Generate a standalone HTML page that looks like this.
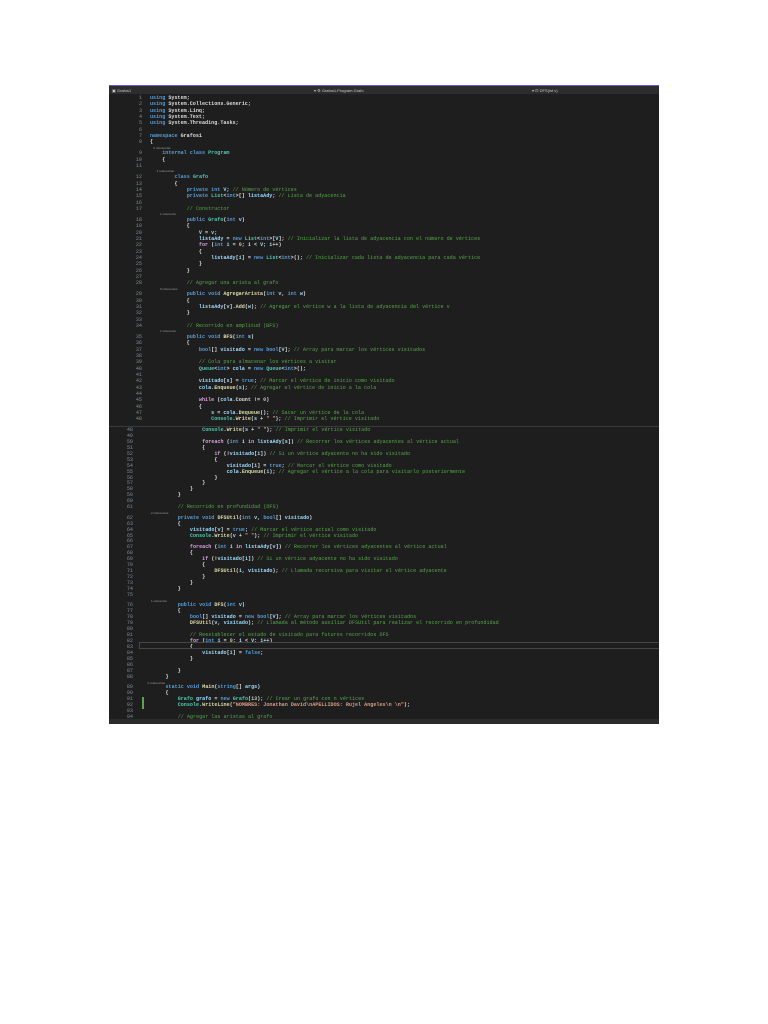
<!DOCTYPE html>
<html><head><meta charset="utf-8"><style>
body{margin:0;background:#fff;width:768px;height:1024px;position:relative;overflow:hidden}
#ed{position:absolute;left:109px;top:85px;width:550px;height:639px;background:#1e1e1e;overflow:hidden}
.top{position:absolute;left:0;top:0;width:550px;height:1px;background:#6a5acd}
.tab{position:absolute;left:0;top:1px;width:550px;height:8px;background:#2d2d30;font:4px "Liberation Sans",sans-serif;color:#ccc}
.tab span{position:absolute;top:1.5px}
.seg{position:absolute;left:0;width:550px;font-family:"Liberation Mono",monospace;font-size:5.1px;color:#dcdcdc;white-space:normal;font-weight:bold}
.l{height:6.33px;line-height:6.33px;position:relative;overflow:visible}
.r{height:4.8px;line-height:4.8px;font-size:3px;color:#999;font-family:"Liberation Sans",sans-serif;position:relative;font-weight:normal}
.n{position:absolute;left:0;width:33px;text-align:right;color:#7d8c93;font-weight:normal}
.c{position:absolute;left:41px;white-space:pre}
.k{color:#569cd6}.t{color:#4ec9b0}.g{color:#57a64a;font-weight:normal}.p{color:#d8a0df}.m{color:#dcdcaa}.v{color:#9cdcfe}.s{color:#d69d85}.u{color:#b5cea8}
.seg2 .l{height:5.95px;line-height:5.95px}
.seg2 .r{height:4.6px;line-height:4.6px}
.seg2 .n{width:24px}.seg2 .c{left:32px}
.stat{position:absolute;left:0;top:634px;width:550px;height:5px;background:#2b2b2b}
.sep{position:absolute;left:0;top:341px;width:550px;height:1px;background:#3a3a3a}
.hl{position:absolute;left:30px;width:520px;height:5px;border:0.5px solid #464646}
.gb{position:absolute;left:33px;width:1.5px;background:#57a64a}
</style></head><body>
<div id="ed">
<div class="top"></div>
<div class="tab"><span style="left:3px">▣ Grafos1</span><span style="left:205px">▾ ⚙ Grafos1.Program.Grafo</span><span style="left:423px">▾ ⊡ DFS(int v)</span></div>
<div class="seg" style="top:10px">
<div class="l"><span class="n">1</span><span class="c"><span class="k">using</span> System;</span></div>
<div class="l"><span class="n">2</span><span class="c"><span class="k">using</span> System.Collections.Generic;</span></div>
<div class="l"><span class="n">3</span><span class="c"><span class="k">using</span> System.Linq;</span></div>
<div class="l"><span class="n">4</span><span class="c"><span class="k">using</span> System.Text;</span></div>
<div class="l"><span class="n">5</span><span class="c"><span class="k">using</span> System.Threading.Tasks;</span></div>
<div class="l"><span class="n">6</span></div>
<div class="l"><span class="n">7</span><span class="c"><span class="k">namespace</span> Grafos1</span></div>
<div class="l"><span class="n">8</span><span class="c">{</span></div>
<div class="r"><span class="c">    0 referencias</span></div>
<div class="l"><span class="n">9</span><span class="c">    <span class="k">internal class</span> <span class="t">Program</span></span></div>
<div class="l"><span class="n">10</span><span class="c">    {</span></div>
<div class="l"><span class="n">11</span></div>
<div class="r"><span class="c">        3 referencias</span></div>
<div class="l"><span class="n">12</span><span class="c">        <span class="k">class</span> <span class="t">Grafo</span></span></div>
<div class="l"><span class="n">13</span><span class="c">        {</span></div>
<div class="l"><span class="n">14</span><span class="c">            <span class="k">private int</span> <span class="v">V</span>; <span class="g">// Número de vértices</span></span></div>
<div class="l"><span class="n">15</span><span class="c">            <span class="k">private</span> <span class="t">List</span>&lt;<span class="k">int</span>&gt;[] <span class="v">listaAdy</span>; <span class="g">// Lista de adyacencia</span></span></div>
<div class="l"><span class="n">16</span></div>
<div class="l"><span class="n">17</span><span class="c">            <span class="g">// Constructor</span></span></div>
<div class="r"><span class="c">            1 referencia</span></div>
<div class="l"><span class="n">18</span><span class="c">            <span class="k">public</span> <span class="t">Grafo</span>(<span class="k">int</span> <span class="v">v</span>)</span></div>
<div class="l"><span class="n">19</span><span class="c">            {</span></div>
<div class="l"><span class="n">20</span><span class="c">                <span class="v">V</span> = <span class="v">v</span>;</span></div>
<div class="l"><span class="n">21</span><span class="c">                <span class="v">listaAdy</span> = <span class="k">new</span> <span class="t">List</span>&lt;<span class="k">int</span>&gt;[<span class="v">V</span>]; <span class="g">// Inicializar la lista de adyacencia con el número de vértices</span></span></div>
<div class="l"><span class="n">22</span><span class="c">                <span class="p">for</span> (<span class="k">int</span> <span class="v">i</span> = <span class="u">0</span>; <span class="v">i</span> &lt; <span class="v">V</span>; <span class="v">i</span>++)</span></div>
<div class="l"><span class="n">23</span><span class="c">                {</span></div>
<div class="l"><span class="n">24</span><span class="c">                    <span class="v">listaAdy</span>[<span class="v">i</span>] = <span class="k">new</span> <span class="t">List</span>&lt;<span class="k">int</span>&gt;(); <span class="g">// Inicializar cada lista de adyacencia para cada vértice</span></span></div>
<div class="l"><span class="n">25</span><span class="c">                }</span></div>
<div class="l"><span class="n">26</span><span class="c">            }</span></div>
<div class="l"><span class="n">27</span></div>
<div class="l"><span class="n">28</span><span class="c">            <span class="g">// Agregar una arista al grafo</span></span></div>
<div class="r"><span class="c">            6 referencias</span></div>
<div class="l"><span class="n">29</span><span class="c">            <span class="k">public void</span> <span class="m">AgregarArista</span>(<span class="k">int</span> <span class="v">v</span>, <span class="k">int</span> <span class="v">w</span>)</span></div>
<div class="l"><span class="n">30</span><span class="c">            {</span></div>
<div class="l"><span class="n">31</span><span class="c">                <span class="v">listaAdy</span>[<span class="v">v</span>].<span class="m">Add</span>(<span class="v">w</span>); <span class="g">// Agregar el vértice w a la lista de adyacencia del vértice v</span></span></div>
<div class="l"><span class="n">32</span><span class="c">            }</span></div>
<div class="l"><span class="n">33</span></div>
<div class="l"><span class="n">34</span><span class="c">            <span class="g">// Recorrido en amplitud (BFS)</span></span></div>
<div class="r"><span class="c">            1 referencia</span></div>
<div class="l"><span class="n">35</span><span class="c">            <span class="k">public void</span> <span class="m">BFS</span>(<span class="k">int</span> <span class="v">s</span>)</span></div>
<div class="l"><span class="n">36</span><span class="c">            {</span></div>
<div class="l"><span class="n">37</span><span class="c">                <span class="k">bool</span>[] <span class="v">visitado</span> = <span class="k">new bool</span>[<span class="v">V</span>]; <span class="g">// Array para marcar los vértices visitados</span></span></div>
<div class="l"><span class="n">38</span></div>
<div class="l"><span class="n">39</span><span class="c">                <span class="g">// Cola para almacenar los vértices a visitar</span></span></div>
<div class="l"><span class="n">40</span><span class="c">                <span class="t">Queue</span>&lt;<span class="k">int</span>&gt; <span class="v">cola</span> = <span class="k">new</span> <span class="t">Queue</span>&lt;<span class="k">int</span>&gt;();</span></div>
<div class="l"><span class="n">41</span></div>
<div class="l"><span class="n">42</span><span class="c">                <span class="v">visitado</span>[<span class="v">s</span>] = <span class="k">true</span>; <span class="g">// Marcar el vértice de inicio como visitado</span></span></div>
<div class="l"><span class="n">43</span><span class="c">                <span class="v">cola</span>.<span class="m">Enqueue</span>(<span class="v">s</span>); <span class="g">// Agregar el vértice de inicio a la cola</span></span></div>
<div class="l"><span class="n">44</span></div>
<div class="l"><span class="n">45</span><span class="c">                <span class="p">while</span> (<span class="v">cola</span>.Count != <span class="u">0</span>)</span></div>
<div class="l"><span class="n">46</span><span class="c">                {</span></div>
<div class="l"><span class="n">47</span><span class="c">                    <span class="v">s</span> = <span class="v">cola</span>.<span class="m">Dequeue</span>(); <span class="g">// Sacar un vértice de la cola</span></span></div>
<div class="l"><span class="n">48</span><span class="c">                    <span class="t">Console</span>.<span class="m">Write</span>(<span class="v">s</span> + <span class="s">" "</span>); <span class="g">// Imprimir el vértice visitado</span></span></div>
</div>
<div class="sep"></div>
<div class="seg seg2" style="top:343px">
<div class="l"><span class="n">48</span><span class="c">                    <span class="t">Console</span>.<span class="m">Write</span>(<span class="v">s</span> + <span class="s">" "</span>); <span class="g">// Imprimir el vértice visitado</span></span></div>
<div class="l"><span class="n">49</span></div>
<div class="l"><span class="n">50</span><span class="c">                    <span class="p">foreach</span> (<span class="k">int</span> <span class="v">i</span> <span class="p">in</span> <span class="v">listaAdy</span>[<span class="v">s</span>]) <span class="g">// Recorrer los vértices adyacentes al vértice actual</span></span></div>
<div class="l"><span class="n">51</span><span class="c">                    {</span></div>
<div class="l"><span class="n">52</span><span class="c">                        <span class="p">if</span> (!<span class="v">visitado</span>[<span class="v">i</span>]) <span class="g">// Si un vértice adyacente no ha sido visitado</span></span></div>
<div class="l"><span class="n">53</span><span class="c">                        {</span></div>
<div class="l"><span class="n">54</span><span class="c">                            <span class="v">visitado</span>[<span class="v">i</span>] = <span class="k">true</span>; <span class="g">// Marcar el vértice como visitado</span></span></div>
<div class="l"><span class="n">55</span><span class="c">                            <span class="v">cola</span>.<span class="m">Enqueue</span>(<span class="v">i</span>); <span class="g">// Agregar el vértice a la cola para visitarlo posteriormente</span></span></div>
<div class="l"><span class="n">56</span><span class="c">                        }</span></div>
<div class="l"><span class="n">57</span><span class="c">                    }</span></div>
<div class="l"><span class="n">58</span><span class="c">                }</span></div>
<div class="l"><span class="n">59</span><span class="c">            }</span></div>
<div class="l"><span class="n">60</span></div>
<div class="l"><span class="n">61</span><span class="c">            <span class="g">// Recorrido en profundidad (DFS)</span></span></div>
<div class="r"><span class="c">            2 referencias</span></div>
<div class="l"><span class="n">62</span><span class="c">            <span class="k">private void</span> <span class="m">DFSUtil</span>(<span class="k">int</span> <span class="v">v</span>, <span class="k">bool</span>[] <span class="v">visitado</span>)</span></div>
<div class="l"><span class="n">63</span><span class="c">            {</span></div>
<div class="l"><span class="n">64</span><span class="c">                <span class="v">visitado</span>[<span class="v">v</span>] = <span class="k">true</span>; <span class="g">// Marcar el vértice actual como visitado</span></span></div>
<div class="l"><span class="n">65</span><span class="c">                <span class="t">Console</span>.<span class="m">Write</span>(<span class="v">v</span> + <span class="s">" "</span>); <span class="g">// Imprimir el vértice visitado</span></span></div>
<div class="l"><span class="n">66</span></div>
<div class="l"><span class="n">67</span><span class="c">                <span class="p">foreach</span> (<span class="k">int</span> <span class="v">i</span> <span class="p">in</span> <span class="v">listaAdy</span>[<span class="v">v</span>]) <span class="g">// Recorrer los vértices adyacentes al vértice actual</span></span></div>
<div class="l"><span class="n">68</span><span class="c">                {</span></div>
<div class="l"><span class="n">69</span><span class="c">                    <span class="p">if</span> (!<span class="v">visitado</span>[<span class="v">i</span>]) <span class="g">// Si un vértice adyacente no ha sido visitado</span></span></div>
<div class="l"><span class="n">70</span><span class="c">                    {</span></div>
<div class="l"><span class="n">71</span><span class="c">                        <span class="m">DFSUtil</span>(<span class="v">i</span>, <span class="v">visitado</span>); <span class="g">// Llamada recursiva para visitar el vértice adyacente</span></span></div>
<div class="l"><span class="n">72</span><span class="c">                    }</span></div>
<div class="l"><span class="n">73</span><span class="c">                }</span></div>
<div class="l"><span class="n">74</span><span class="c">            }</span></div>
<div class="l"><span class="n">75</span></div>
<div class="r"><span class="c">            1 referencia</span></div>
<div class="l"><span class="n">76</span><span class="c">            <span class="k">public void</span> <span class="m">DFS</span>(<span class="k">int</span> <span class="v">v</span>)</span></div>
<div class="l"><span class="n">77</span><span class="c">            {</span></div>
<div class="l"><span class="n">78</span><span class="c">                <span class="k">bool</span>[] <span class="v">visitado</span> = <span class="k">new bool</span>[<span class="v">V</span>]; <span class="g">// Array para marcar los vértices visitados</span></span></div>
<div class="l"><span class="n">79</span><span class="c">                <span class="m">DFSUtil</span>(<span class="v">v</span>, <span class="v">visitado</span>); <span class="g">// Llamada al método auxiliar DFSUtil para realizar el recorrido en profundidad</span></span></div>
<div class="l"><span class="n">80</span></div>
<div class="l"><span class="n">81</span><span class="c">                <span class="g">// Reestablecer el estado de visitado para futuros recorridos DFS</span></span></div>
<div class="l"><span class="n">82</span><span class="c">                <span class="p">for</span> (<span class="k">int</span> <span class="v">i</span> = <span class="u">0</span>; <span class="v">i</span> &lt; <span class="v">V</span>; <span class="v">i</span>++)</span></div>
<div class="l"><span class="n">83</span><span class="c">                {</span></div>
<div class="l"><span class="n">84</span><span class="c">                    <span class="v">visitado</span>[<span class="v">i</span>] = <span class="k">false</span>;</span></div>
<div class="l"><span class="n">85</span><span class="c">                }</span></div>
<div class="l"><span class="n">86</span></div>
<div class="l"><span class="n">87</span><span class="c">            }</span></div>
<div class="l"><span class="n">88</span><span class="c">        }</span></div>
<div class="r"><span class="c">        0 referencias</span></div>
<div class="l"><span class="n">89</span><span class="c">        <span class="k">static void</span> <span class="m">Main</span>(<span class="k">string</span>[] <span class="v">args</span>)</span></div>
<div class="l"><span class="n">90</span><span class="c">        {</span></div>
<div class="l"><span class="n">91</span><span class="c">            <span class="t">Grafo</span> <span class="v">grafo</span> = <span class="k">new</span> <span class="t">Grafo</span>(<span class="u">13</span>); <span class="g">// Crear un grafo con n vértices</span></span></div>
<div class="l"><span class="n">92</span><span class="c">            <span class="t">Console</span>.<span class="m">WriteLine</span>(<span class="s">"NOMBRES: Jonathan David\nAPELLIDOS: Rujel Angeles\n \n"</span>);</span></div>
<div class="l"><span class="n">93</span></div>
<div class="l"><span class="n">94</span><span class="c">            <span class="g">// Agregar las aristas al grafo</span></span></div>
</div>
<div class="hl" style="top:557px"></div>
<div class="gb" style="top:612px;height:12px"></div>
<div class="stat"></div>
</div>
</body></html>
